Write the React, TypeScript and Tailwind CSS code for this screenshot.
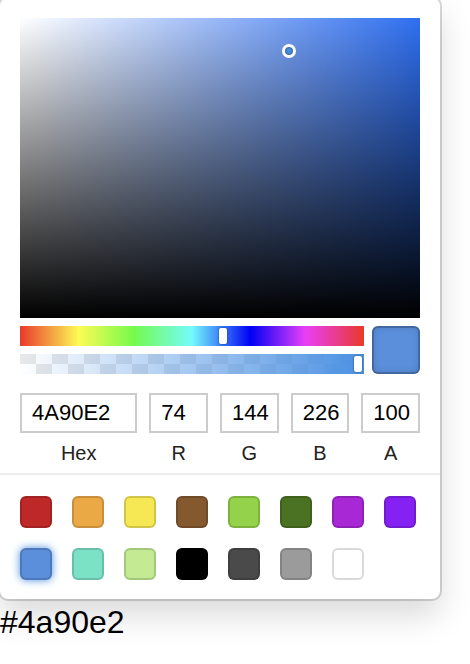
import React from "react";

const presets = [
    "#be2828", "#eba945", "#f6e855", "#845930", "#93d24a", "#4b7223", "#a928d6", "#8522f3",
    "#5b8fdc", "#7be2c5", "#c4ea94", "#000000", "#4a4a4a", "#9b9b9b", "#ffffff",
];

const fields = [
    { label: "Hex", value: "4A90E2", hex: true },
    { label: "R", value: "74" },
    { label: "G", value: "144" },
    { label: "B", value: "226" },
    { label: "A", value: "100" },
];

const App = () => {
    return (
        <div className="w-[470px] h-[664px] bg-white overflow-hidden font-['Liberation_Sans',Arial,sans-serif] text-[#222]">
            <div className="w-[440px] mt-[-2px] bg-white rounded-[8px] shadow-[0_0_0_2px_rgba(0,0,0,0.15),0_16px_32px_rgba(0,0,0,0.15)]">
                <div className="p-[20px] pb-0">
                    {/* saturation */}
                    <div className="relative h-[300px] w-full bg-[#2f6ff0]">
                        <div className="absolute inset-0 bg-gradient-to-r from-white to-transparent" />
                        <div className="absolute inset-0 bg-gradient-to-b from-transparent to-black" />
                        <div className="absolute left-[262px] top-[26px] w-[14px] h-[14px] rounded-full border-[3px] border-white bg-[#4a90e2] shadow-[inset_0_0_2px_1px_rgba(0,0,0,0.3)]" />
                    </div>

                    <div className="flex gap-[8px] mt-[8px]">
                        <div className="flex-1 flex flex-col gap-[8px]">
                            <div className="relative h-[20px] bg-[linear-gradient(to_right,#e8392b_0%,#fdfb55_17%,#75fb4c_33%,#73fbfd_50%,#0000f5_67%,#ea3ff7_83%,#e8392b_100%)]">
                                <div className="absolute left-[199px] top-[2px] w-[8px] h-[16px] rounded-[2px] bg-white shadow-[0_0_2px_rgba(0,0,0,0.6)]" />
                            </div>
                            <div className="relative h-[20px] bg-[repeating-conic-gradient(#ffffff_0%_25%,#e8e8e8_0%_50%)] bg-[length:32px_20px]">
                                <div className="absolute inset-0 bg-gradient-to-r from-transparent to-[#4a90e2]" />
                                <div className="absolute left-[334px] top-[2px] w-[8px] h-[16px] rounded-[2px] bg-white shadow-[0_0_2px_rgba(0,0,0,0.6)]" />
                            </div>
                        </div>
                        <div className="w-[48px] h-[48px] rounded-[6px] bg-[#5b8fdc] shadow-[inset_0_0_0_2px_rgba(0,0,0,0.2),inset_0_0_8px_rgba(0,0,0,0.2)]" />
                    </div>

                    <div className="flex mt-[19px]">
                        {fields.map((f) => (
                            <div key={f.label} className={f.hex ? "flex-[2]" : "flex-1 pl-[12px]"}>
                                <div className="h-[40px] border-2 border-[#cccccc] pl-[10px] text-[22px] leading-[36px] text-black">
                                    {f.value}
                                </div>
                                <div className="text-center text-[20px] leading-[40px] text-[#222]">{f.label}</div>
                            </div>
                        ))}
                    </div>
                </div>

                <div className="border-t-2 border-[#eeeeee] pl-[20px] pt-[21px] pb-[19px]">
                    <div className="grid grid-cols-[repeat(8,32px)] gap-x-[20px] gap-y-[20px]">
                        {presets.map((c, i) => (
                            <div
                                key={c}
                                className={
                                    i === 8
                                        ? "w-[32px] h-[32px] rounded-[6px] shadow-[inset_0_0_0_2px_rgba(0,0,0,0.15),0_0_8px_#4a90e2]"
                                        : "w-[32px] h-[32px] rounded-[6px] shadow-[inset_0_0_0_2px_rgba(0,0,0,0.15)]"
                                }
                                style={{ backgroundColor: c }}
                            />
                        ))}
                    </div>
                </div>
            </div>
            <div className="text-[32px] leading-[46px] text-black">#4a90e2</div>
        </div>
    );
};

export default App;
